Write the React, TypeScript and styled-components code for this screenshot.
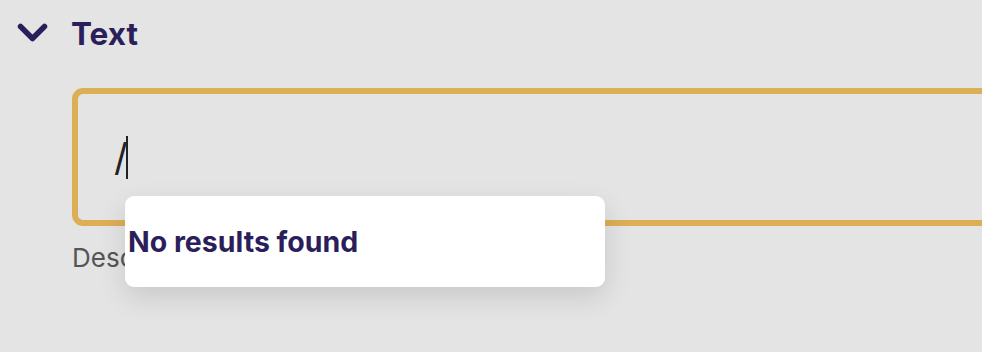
import React from "react";
import styled, { createGlobalStyle } from "styled-components";

const GlobalStyle = createGlobalStyle`
  html, body {
    margin: 0;
    padding: 0;
    background: #e4e4e4;
    overflow: hidden;
  }
  body {
    font-family: Inter, "Noto Sans", sans-serif;
  }
`;

const Page = styled.div`
  width: 982px;
  height: 352px;
  overflow: hidden;
  background: #e4e4e4;
`;

const Header = styled.div`
  display: flex;
  align-items: center;
  gap: 23px;
  padding: 13px 0 0 17px;
  height: 40px;
`;

const Title = styled.h2`
  margin: 0;
  font-size: 31.5px;
  font-weight: 700;
  color: #2a1f5a;
`;

const Field = styled.div`
  position: relative;
  margin: 35px 0 0 72px;
`;

const InputBox = styled.div`
  box-sizing: border-box;
  width: 1000px;
  height: 138px;
  border: 6px solid #dcae56;
  border-radius: 11px;
  display: flex;
  align-items: center;
  padding-left: 36px;
`;

const Typed = styled.span`
  font-size: 38px;
  color: #222;
  line-height: 42px;
  display: flex;
  align-items: center;
`;

const Caret = styled.span`
  display: inline-block;
  width: 2px;
  height: 43px;
  background: #222;
  margin-left: -2px;
`;

const Help = styled.p`
  margin: 16px 0 0;
  font-size: 26px;
  color: #555;
`;

const Popup = styled.div`
  position: absolute;
  left: 53px;
  top: 108px;
  width: 480px;
  height: 91px;
  box-sizing: border-box;
  background: #fff;
  border-radius: 9px;
  box-shadow: 0 10px 28px rgba(0, 0, 0, 0.12);
  display: flex;
  align-items: center;
  padding: 0 0 0 3px;
`;

const Empty = styled.span`
  font-size: 28.5px;
  font-weight: 700;
  color: #2a1f5a;
`;

const Chevron = () => (
  <svg width="31" height="20" viewBox="0 0 31 20">
    <path
      d="M3.5 3.5 L15.5 15.5 L27.5 3.5"
      fill="none"
      stroke="#2a1f5a"
      strokeWidth="5.5"
      strokeLinecap="round"
      strokeLinejoin="round"
    />
  </svg>
);

export default function App() {
  return (
    <Page>
      <GlobalStyle />
      <Header>
        <Chevron />
        <Title>Text</Title>
      </Header>
      <Field>
        <InputBox>
          <Typed>
            /<Caret />
          </Typed>
        </InputBox>
        <Help>Description</Help>
        <Popup>
          <Empty>No results found</Empty>
        </Popup>
      </Field>
    </Page>
  );
}
